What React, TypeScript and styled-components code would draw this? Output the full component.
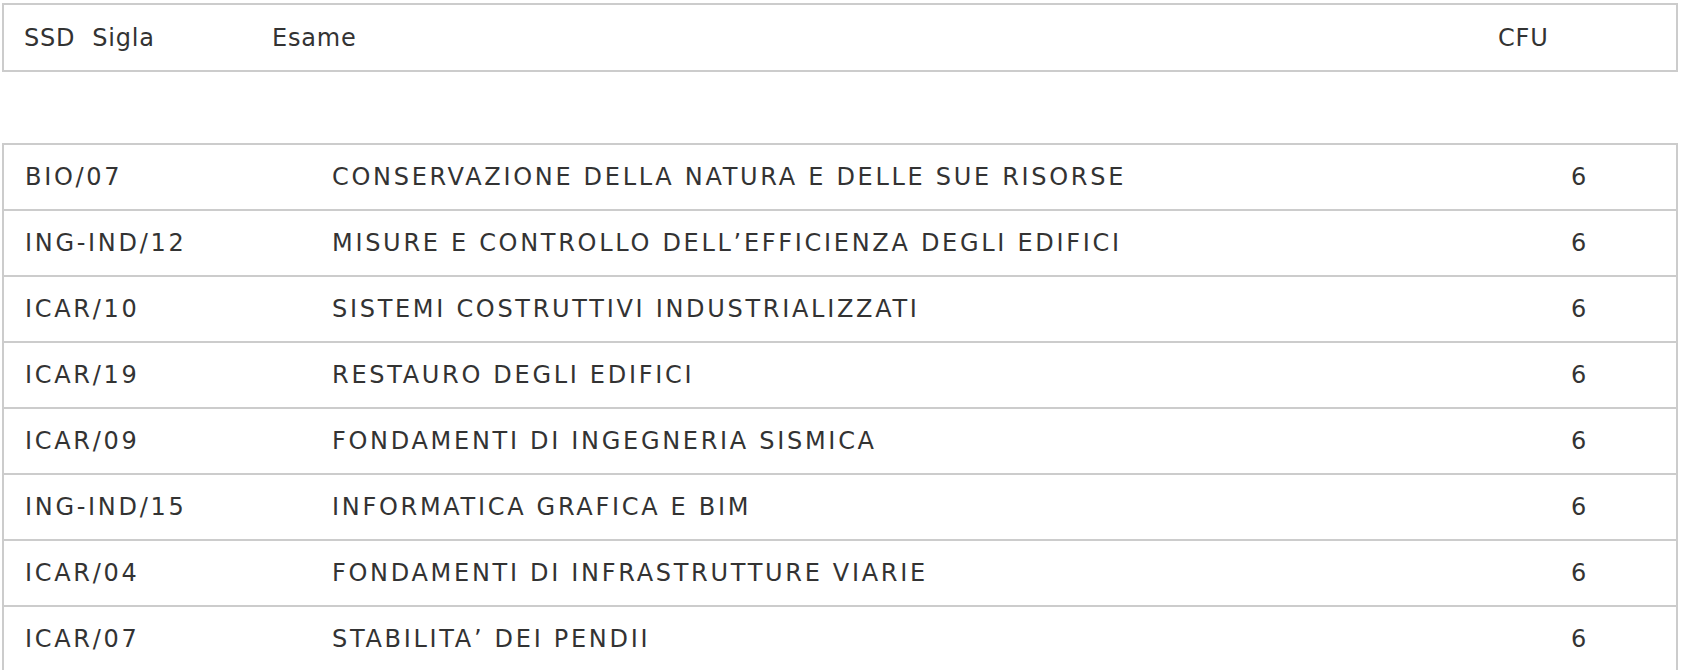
import React from "react";
import styled, { createGlobalStyle } from "styled-components";

const GlobalStyle = createGlobalStyle`
  html, body {
    margin: 0;
    padding: 0;
    background: #ffffff;
  }
  body {
    font-family: "DejaVu Sans", "Liberation Sans", sans-serif;
    color: #333333;
  }
`;

const Page = styled.div`
  padding: 3px 6px 0 2px;
`;

const HeaderBox = styled.div`
  display: grid;
  grid-template-columns: 248px 1226px 1fr;
  align-items: center;
  height: 65px;
  padding-left: 20px;
  border: 2px solid #cccccc;
  font-size: 24px;
  letter-spacing: 0.8px;
  color: #333333;
`;

const ExamTable = styled.div`
  margin-top: 71px;
  border: 2px solid #cccccc;
  border-bottom: none;
`;

const Row = styled.div`
  display: grid;
  grid-template-columns: 307px 1239px 1fr;
  align-items: center;
  height: 64px;
  padding-left: 21px;
  font-size: 24px;
  letter-spacing: 2.7px;
  color: #333333;
  border-bottom: 2px solid #cccccc;
`;

const Cell = styled.span`
  white-space: nowrap;
`;

const esami = [
  { ssd: "BIO/07", nome: "CONSERVAZIONE DELLA NATURA E DELLE SUE RISORSE", cfu: 6 },
  { ssd: "ING-IND/12", nome: "MISURE E CONTROLLO DELL’EFFICIENZA DEGLI EDIFICI", cfu: 6 },
  { ssd: "ICAR/10", nome: "SISTEMI COSTRUTTIVI INDUSTRIALIZZATI", cfu: 6 },
  { ssd: "ICAR/19", nome: "RESTAURO DEGLI EDIFICI", cfu: 6 },
  { ssd: "ICAR/09", nome: "FONDAMENTI DI INGEGNERIA SISMICA", cfu: 6 },
  { ssd: "ING-IND/15", nome: "INFORMATICA GRAFICA E BIM", cfu: 6 },
  { ssd: "ICAR/04", nome: "FONDAMENTI DI INFRASTRUTTURE VIARIE", cfu: 6 },
  { ssd: "ICAR/07", nome: "STABILITA’ DEI PENDII", cfu: 6 },
];

const App = () => {
  return (
    <Page>
      <GlobalStyle />
      <HeaderBox>
        <Cell>SSD&nbsp; Sigla</Cell>
        <Cell>Esame</Cell>
        <Cell>CFU</Cell>
      </HeaderBox>
      <ExamTable>
        {esami.map((item) => (
          <Row key={item.ssd}>
            <Cell>{item.ssd}</Cell>
            <Cell>{item.nome}</Cell>
            <Cell>{item.cfu}</Cell>
          </Row>
        ))}
      </ExamTable>
    </Page>
  );
};

export default App;
